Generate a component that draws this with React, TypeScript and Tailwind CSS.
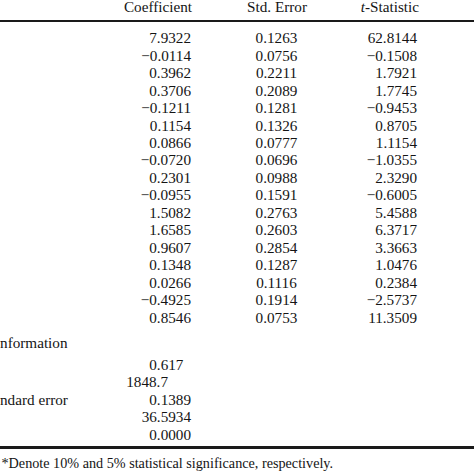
const rows: [string, string, string][] = [
  ['7.9322', '0.1263', '62.8144'],
  ['−0.0114', '0.0756', '−0.1508'],
  ['0.3962', '0.2211', '1.7921'],
  ['0.3706', '0.2089', '1.7745'],
  ['−0.1211', '0.1281', '−0.9453'],
  ['0.1154', '0.1326', '0.8705'],
  ['0.0866', '0.0777', '1.1154'],
  ['−0.0720', '0.0696', '−1.0355'],
  ['0.2301', '0.0988', '2.3290'],
  ['−0.0955', '0.1591', '−0.6005'],
  ['1.5082', '0.2763', '5.4588'],
  ['1.6585', '0.2603', '6.3717'],
  ['0.9607', '0.2854', '3.3663'],
  ['0.1348', '0.1287', '1.0476'],
  ['0.0266', '0.1116', '0.2384'],
  ['−0.4925', '0.1914', '−2.5737'],
  ['0.8546', '0.0753', '11.3509'],
];

const App = () => {
  return (
    <div
      className="w-[474px] h-[474px] overflow-hidden bg-white text-[#141414] text-[15.2px] leading-[17.45px]"
      style={{ fontFamily: '"Liberation Serif", "Times New Roman", serif' }}
    >
      {/* header */}
      <div className="h-[21.5px]">
        <div className="flex -mt-[2px] whitespace-nowrap">
          <div className="w-[120px] shrink-0" />
          <div className="w-[72px] shrink-0 flex justify-end">Coefficient</div>
          <div className="w-[170px] shrink-0 flex justify-center">Std. Error</div>
          <div className="w-[57px] shrink-0 flex justify-end">
            <span>
              <i>t</i>-Statistic
            </span>
          </div>
        </div>
      </div>
      <div className="h-[2.5px] bg-[#1a1a1a]" />

      {/* estimates */}
      <div className="pt-[7.3px]">
        {rows.map((r, i) => (
          <div key={i} className="flex">
            <div className="w-[120px]" />
            <div className="w-[71px] text-right">{r[0]}</div>
            <div className="w-[171px] text-center">{r[1]}</div>
            <div className="w-[55px] text-right">{r[2]}</div>
          </div>
        ))}
      </div>

      {/* diagnostics */}
      <div className="pt-[7.5px] -ml-[4.2px] whitespace-nowrap">information</div>
      <div className="pt-[5px]">
        <div className="flex">
          <div className="w-[120px]" />
          <div className="w-[71px] text-right pr-[7.6px]">0.617</div>
        </div>
        <div className="flex">
          <div className="w-[120px]" />
          <div className="w-[71px] text-right pr-[23px]">1848.7</div>
        </div>
        <div className="flex">
          <div className="w-[120px] -ml-[19.4px] shrink-0 whitespace-nowrap">Standard error</div>
          <div className="w-[90.4px] text-right">0.1389</div>
        </div>
        <div className="flex">
          <div className="w-[120px]" />
          <div className="w-[71px] text-right">36.5934</div>
        </div>
        <div className="flex">
          <div className="w-[120px]" />
          <div className="w-[71px] text-right">0.0000</div>
        </div>
      </div>

      <div className="mt-[2.5px] h-[3px] bg-[#1a1a1a]" />
      <div className="pt-[6px] pl-[1.5px] text-[14.2px] leading-[16px] whitespace-nowrap">
        *Denote 10% and 5% statistical significance, respectively.
      </div>
    </div>
  );
};

export default App;
